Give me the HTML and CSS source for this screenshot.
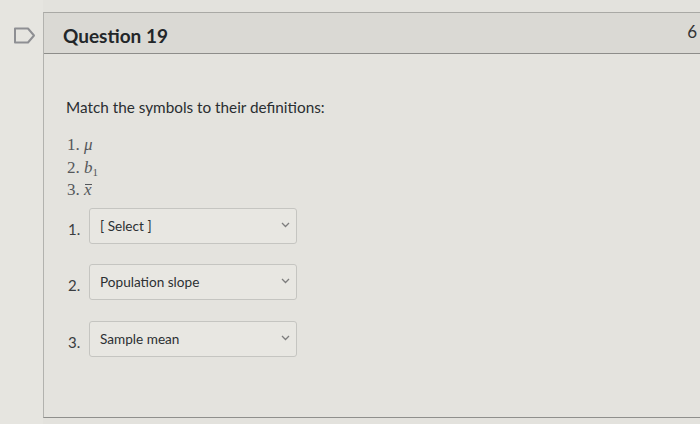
FILE: index.html
```html
<!DOCTYPE html>
<html lang="en">
<head>
<meta charset="utf-8">
<title>Question 19</title>
<link rel="stylesheet" href="styles.css">
</head>
<body>
<div class="page">
  <div class="gutter">
    <svg class="flag" width="23" height="17" viewBox="0 0 23 17" aria-hidden="true">
      <path d="M2 1.5 H15 L21 8.5 L15 15.5 H2 Z" fill="none" stroke="#8e8f93" stroke-width="2" stroke-linejoin="round"/>
    </svg>
  </div>
  <div class="card">
    <div class="card-header">
      <h2 class="title">Question 19</h2>
      <span class="pts">6</span>
    </div>
    <div class="card-body">
      <p class="prompt">Match the symbols to their definitions:</p>
      <ol class="math-list">
        <li><span class="num">1.</span> <i>μ</i></li>
        <li><span class="num">2.</span> <i>b</i><sub>1</sub></li>
        <li><span class="num">3.</span> <i class="bar">x</i></li>
      </ol>
      <div class="answers">
        <div class="answer">
          <span class="label">1.</span>
          <div class="select"><span class="value">[ Select ]</span><svg class="chev" width="9" height="6" viewBox="0 0 9 6"><path d="M1 1 L4.5 4.5 L8 1" fill="none" stroke="#7d7d7d" stroke-width="1.3"/></svg></div>
        </div>
        <div class="answer">
          <span class="label">2.</span>
          <div class="select"><span class="value">Population slope</span><svg class="chev" width="9" height="6" viewBox="0 0 9 6"><path d="M1 1 L4.5 4.5 L8 1" fill="none" stroke="#7d7d7d" stroke-width="1.3"/></svg></div>
        </div>
        <div class="answer">
          <span class="label">3.</span>
          <div class="select"><span class="value">Sample mean</span><svg class="chev" width="9" height="6" viewBox="0 0 9 6"><path d="M1 1 L4.5 4.5 L8 1" fill="none" stroke="#7d7d7d" stroke-width="1.3"/></svg></div>
        </div>
      </div>
    </div>
  </div>
</div>
</body>
</html>
```
FILE: styles.css
```css
html, body {
  margin: 0;
  padding: 0;
  background: #e3e2dd;
  overflow: hidden;
}
body {
  font-family: Lato, "Liberation Sans", sans-serif;
  color: #2e3235;
  width: 700px;
  height: 424px;
}
.page {
  display: flex;
  height: 424px;
}
.gutter {
  width: 43px;
  flex: none;
  padding-top: 27px;
  box-sizing: border-box;
  background: #e6e5e0;
}
.flag {
  display: block;
  margin-left: 13px;
}
.card {
  flex: 1;
  margin-top: 12px;
  height: 406px;
  box-sizing: border-box;
  border-top: 1px solid #a9a9a5;
  border-left: 1px solid #b2b2ae;
  border-bottom: 1px solid #8f8f8c;
  display: flex;
  flex-direction: column;
  background: #e4e3de;
  min-width: 0;
}
.card-header {
  height: 41px;
  flex: none;
  box-sizing: border-box;
  background: #dad9d4;
  border-bottom: 1px solid #8d8d8a;
  display: flex;
  align-items: center;
  justify-content: space-between;
  padding-left: 19px;
  padding-right: 3px;
  padding-top: 4px;
  overflow: hidden;
}
.title {
  margin: 0;
  font-size: 19px;
  font-weight: 700;
  color: #222629;
}
.pts {
  font-size: 17px;
  color: #333;
  white-space: nowrap;
  align-self: flex-start;
  margin-top: 4px;
}
.card-body {
  padding-left: 22px;
  padding-top: 43px;
}
.prompt {
  margin: 0;
  font-size: 15.3px;
  line-height: 20px;
  color: #2a2e31;
}
.math-list {
  list-style: none;
  margin: 17px 0 0 0;
  padding: 0 0 0 1px;
  font-family: "Liberation Serif", "DejaVu Serif", serif;
  font-size: 17px;
  line-height: 22.5px;
  color: #55585b;
}
.math-list li {
  height: 22.5px;
}
.math-list i {
  font-style: italic;
}
.math-list sub {
  font-size: 11px;
  vertical-align: -3px;
  line-height: 0;
}
.bar {
  position: relative;
}
.bar::before {
  content: "";
  position: absolute;
  left: 1px;
  right: 0;
  top: 4px;
  border-top: 1px solid #55585b;
}
.answers {
  display: flex;
  flex-direction: column;
  gap: 20.5px;
  margin-top: 6px;
}
.answer {
  display: flex;
  align-items: center;
  gap: 7px;
  padding-left: 2px;
}
.label {
  font-size: 15px;
  color: #3a3d40;
  width: 14px;
  padding-top: 6px;
}
.select {
  width: 208px;
  height: 36px;
  box-sizing: border-box;
  border: 1px solid #c5c5c1;
  border-radius: 3px;
  background: #e8e7e2;
  display: flex;
  align-items: center;
  justify-content: space-between;
  padding: 0 6px 0 10px;
}
.value {
  font-size: 13.6px;
  color: #2c3033;
}
.chev {
  display: block;
  margin-bottom: 2px;
}
```
